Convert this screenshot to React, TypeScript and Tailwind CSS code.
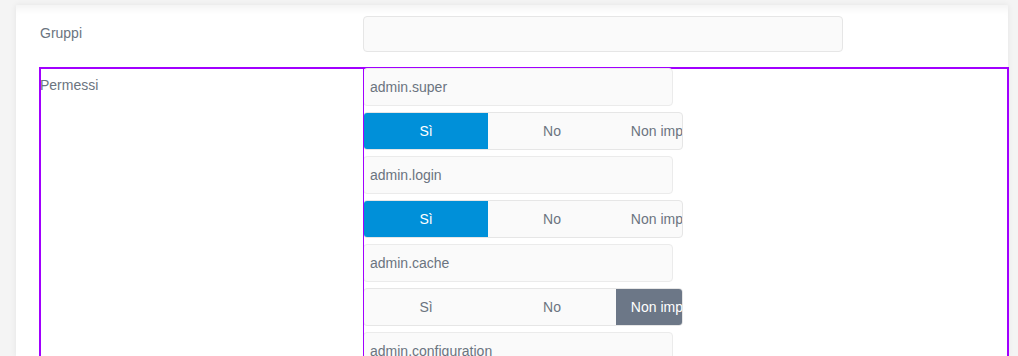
import { useState } from "react";

type Choice = "si" | "no" | "unset";

const initial: { name: string; value: Choice }[] = [
    { name: "admin.super", value: "si" },
    { name: "admin.login", value: "si" },
    { name: "admin.cache", value: "unset" },
    { name: "admin.configuration", value: "unset" },
    { name: "admin.users", value: "unset" },
];

function Toggle({ value, onChange }: { value: Choice; onChange: (v: Choice) => void }) {
    const opts: { key: Choice; label: string; w: string; on: string }[] = [
        { key: "si", label: "Sì", w: "w-[124px]", on: "bg-[#0090d9] text-white" },
        { key: "no", label: "No", w: "w-[128px]", on: "bg-[#0090d9] text-white" },
        { key: "unset", label: "Non impostato", w: "w-[120px]", on: "bg-[#6c7787] text-white" },
    ];
    return (
        <div className="flex w-[320px] h-[38px] overflow-hidden rounded-[4px] border border-[#e6e6e6] bg-[#fafafa]">
            {opts.map((o) => (
                <button
                    key={o.key}
                    onClick={() => onChange(o.key)}
                    className={`${o.w} shrink-0 h-full flex items-center justify-center whitespace-nowrap text-[14px] ${value === o.key ? o.on : "text-[#6b7480]"}`}
                >
                    {o.label}
                </button>
            ))}
        </div>
    );
}

export default function App() {
    const [perms, setPerms] = useState(initial);

    return (
        <div className="h-[356px] overflow-hidden bg-[#f4f4f4] pt-[5px] pl-[16px] pr-[10px] font-['Liberation_Sans',Arial,sans-serif]">
            <div className="h-full bg-white pt-[11px] pl-[24px] shadow-[0_0_6px_rgba(0,0,0,0.07),inset_0_9px_8px_-6px_rgba(0,0,0,0.06)]">
                {/* Gruppi */}
                <div className="flex items-center">
                    <div className="w-[323px] pb-[2px] text-[14px] text-[#6b7480]">Gruppi</div>
                    <div className="w-[480px] h-[36px] rounded-[4px] border border-[#e6e6e6] bg-[#fafafa]" />
                </div>

                {/* Permessi */}
                <div className="flex mt-[16px] outline-2 outline-[#a100ff] -outline-offset-1">
                    <div className="w-[323px] pt-[8px] text-[14px] leading-[18px] text-[#6b7480]">Permessi</div>
                    <div className="relative flex flex-col gap-[6px] before:absolute before:inset-y-0 before:left-0 before:z-10 before:w-px before:bg-[#a100ff]">
                        {perms.map((p, i) => (
                            <div key={p.name} className="flex flex-col gap-[6px]">
                                <div className="w-[310px] h-[38px] flex items-center px-[6px] rounded-[4px] border border-[#ebebeb] bg-[#fafafa] text-[14px] text-[#6b7480]">
                                    {p.name}
                                </div>
                                <Toggle
                                    value={p.value}
                                    onChange={(v) =>
                                        setPerms((prev) => prev.map((x, j) => (j === i ? { ...x, value: v } : x)))
                                    }
                                />
                            </div>
                        ))}
                    </div>
                </div>
            </div>
        </div>
    );
}
